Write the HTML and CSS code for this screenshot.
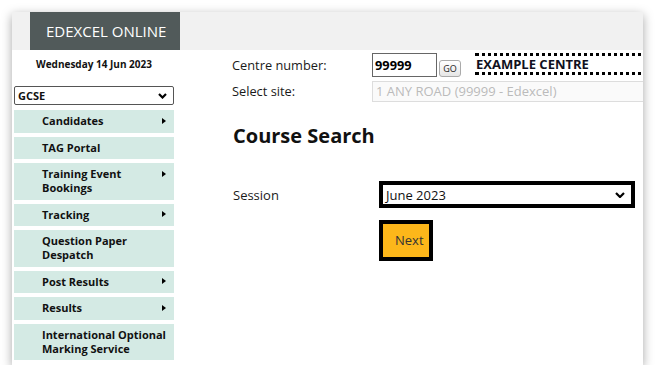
FILE: index.html
```html
<!DOCTYPE html>
<html lang="en">
<head>
<meta charset="utf-8">
<title>Edexcel Online - Course Search</title>
<link rel="stylesheet" href="styles.css">
</head>
<body>
<div class="window">
  <div class="header">
    <div class="brand">EDEXCEL ONLINE</div>
  </div>
  <div class="content">
    <aside class="sidebar">
      <div class="date">Wednesday 14 Jun 2023</div>
      <div class="qual-select">
        <span>GCSE</span>
        <svg class="chev" width="9" height="6" viewBox="0 0 9 6"><path d="M1 1 L4.5 4.5 L8 1" fill="none" stroke="#000" stroke-width="2.2"/></svg>
      </div>
      <ul class="menu">
        <li class="item has-sub"><span>Candidates</span><i class="tri"></i></li>
        <li class="item"><span>TAG Portal</span></li>
        <li class="item has-sub"><span>Training Event<br>Bookings</span><i class="tri"></i></li>
        <li class="item has-sub"><span>Tracking</span><i class="tri"></i></li>
        <li class="item"><span>Question Paper<br>Despatch</span></li>
        <li class="item has-sub"><span>Post Results</span><i class="tri"></i></li>
        <li class="item has-sub"><span>Results</span><i class="tri"></i></li>
        <li class="item"><span>International Optional<br>Marking Service</span></li>
      </ul>
    </aside>
    <main class="main">
      <div class="centre-form">
        <div class="row row-centre">
          <label class="lbl">Centre number:</label>
          <div class="centre-controls">
            <div class="centre-input">99999</div>
            <div class="go-btn">GO</div>
            <div class="centre-name">EXAMPLE CENTRE</div>
          </div>
        </div>
        <div class="row row-site">
          <label class="lbl">Select site:</label>
          <div class="site-select">1 ANY ROAD (99999 - Edexcel)</div>
        </div>
      </div>
      <h1 class="title">Course Search</h1>
      <div class="search-form">
        <div class="srow">
          <label class="slbl">Session</label>
          <div class="session-select">
            <span>June 2023</span>
            <svg class="chev" width="10" height="6" viewBox="0 0 10 6"><path d="M1 1 L5 5 L9 1" fill="none" stroke="#000" stroke-width="2.2"/></svg>
          </div>
        </div>
        <div class="srow">
          <span class="slbl"></span>
          <div class="next-btn">Next</div>
        </div>
      </div>
    </main>
  </div>
</div>
</body>
</html>
```
FILE: styles.css
```css
* { box-sizing: border-box; }
html, body { margin: 0; padding: 0; background: #fff; }
body {
  font-family: "Open Sans", "DejaVu Sans", sans-serif;
  color: #111;
  padding: 12px 0 0 12px;
}
.window {
  width: 631px;
  height: 353px;
  background: #fff;
  overflow: hidden;
  box-shadow: 0 3px 10px rgba(0,0,0,0.35);
  display: flex;
  flex-direction: column;
}
.header {
  height: 38px;
  flex: none;
  background: #f1f1f1;
  padding-left: 18px;
  display: flex;
}
.brand {
  width: 150px;
  background: #515a5a;
  color: #fff;
  font-size: 15px;
  line-height: 38px;
  padding-left: 16px;
}
.content {
  display: flex;
  flex: 1;
}
.sidebar {
  width: 160px;
  margin-left: 2px;
  flex: none;
}
.date {
  height: 36px;
  padding-top: 8px;
  font-size: 10px;
  font-weight: 700;
  line-height: 13px;
  text-align: center;
  color: #111;
}
.qual-select {
  height: 19px;
  border: 1px solid #555;
  border-radius: 2px;
  display: flex;
  align-items: center;
  justify-content: space-between;
  padding: 0 6px 0 3px;
  font-size: 11px;
  font-weight: 700;
}
.menu {
  list-style: none;
  margin: 5px 0 0;
  padding: 0;
  display: flex;
  flex-direction: column;
  gap: 4px;
}
.item {
  background: #d4eae4;
  padding: 4px 8px 4.5px 28px;
  font-size: 11px;
  font-weight: 700;
  line-height: 14px;
  display: flex;
  justify-content: space-between;
  align-items: flex-start;
}
.tri {
  width: 0;
  height: 0;
  margin-top: 3.5px;
  border-left: 4px solid #000;
  border-top: 3.5px solid transparent;
  border-bottom: 3.5px solid transparent;
}
.main {
  flex: 1;
  padding-left: 58px;
}
.row {
  display: flex;
  align-items: center;
}
.lbl {
  width: 140px;
  flex: none;
  font-size: 12.8px;
  color: #1a1a1a;
}
.row-centre {
  margin-top: 3px;
  height: 24px;
}
.centre-controls {
  display: flex;
  align-items: flex-start;
  height: 24px;
  flex: none;
}
.centre-input {
  width: 65px;
  height: 24px;
  border: 1px solid #666;
  font-size: 12.8px;
  font-weight: 700;
  line-height: 22px;
  padding-left: 2px;
  color: #000;
}
.go-btn {
  margin: 7px 0 0 2px;
  width: 22px;
  height: 17px;
  border: 1px solid #aaa;
  border-radius: 3px;
  background: linear-gradient(#fff, #e6e6e6);
  font-size: 9px;
  line-height: 15px;
  text-align: center;
  color: #222;
}
.centre-name {
  margin-left: 14px;
  width: 240px;
  height: 22px;
  border-top: 3px dotted #000;
  border-bottom: 3px dotted #000;
  font-size: 13px;
  font-weight: 700;
  line-height: 16px;
  padding-left: 1px;
  color: #101020;
}
.row-site {
  margin-top: 4px;
  height: 20px;
}
.site-select {
  width: 320px;
  height: 21px;
  flex: none;
  border: 1px solid #ddd;
  background: #fafafa;
  color: #bbb;
  font-size: 13px;
  line-height: 19px;
  padding-left: 3px;
}
.title {
  margin: 22px 0 0 1px;
  font-size: 20px;
  font-weight: 700;
  line-height: 26px;
  color: #111;
}
.search-form {
  margin-top: 32px;
  margin-left: 1px;
  display: flex;
  flex-direction: column;
  gap: 12px;
}
.srow {
  display: flex;
  align-items: center;
}
.slbl {
  width: 146px;
  flex: none;
  font-size: 13px;
  color: #1a1a1a;
}
.session-select {
  width: 256px;
  height: 27px;
  border: 4px solid #000;
  display: flex;
  align-items: center;
  justify-content: space-between;
  padding: 0 6px 0 3px;
  font-size: 13px;
  color: #111;
}
.next-btn {
  width: 54px;
  height: 41px;
  border: 4px solid #000;
  background: #fdb71a;
  font-size: 13px;
  line-height: 33px;
  padding-left: 12px;
  color: #333;
}
```
